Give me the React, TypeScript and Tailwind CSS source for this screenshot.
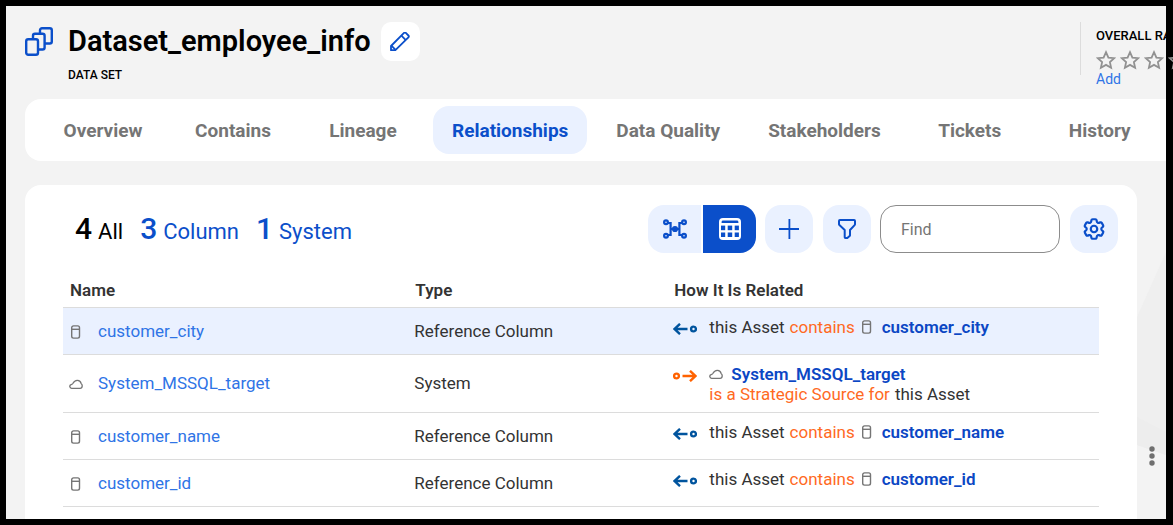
import React, { useState } from 'react';
import { HiOutlineCog6Tooth } from 'react-icons/hi2';

type AssetKind = 'column' | 'system';

interface Relationship {
  name: string;
  kind: AssetKind;
  type: string;
  relation: string;
  direction: 'in' | 'out';
}

const TABS = ['Overview', 'Contains', 'Lineage', 'Relationships', 'Data Quality', 'Stakeholders', 'Tickets', 'History'];

const COUNTS = [
  { count: 4, label: 'All' },
  { count: 3, label: 'Column' },
  { count: 1, label: 'System' },
];

const RELATIONSHIPS: Relationship[] = [
  { name: 'customer_city', kind: 'column', type: 'Reference Column', relation: 'contains', direction: 'in' },
  { name: 'System_MSSQL_target', kind: 'system', type: 'System', relation: 'is a Strategic Source for', direction: 'out' },
  { name: 'customer_name', kind: 'column', type: 'Reference Column', relation: 'contains', direction: 'in' },
  { name: 'customer_id', kind: 'column', type: 'Reference Column', relation: 'contains', direction: 'in' },
];

const DatasetIcon = () => (
  <svg width="28" height="29" viewBox="0 0 28 29" fill="none" stroke="currentColor" strokeWidth="2.4" className="shrink-0">
    <rect x="1.2" y="12.2" width="11.8" height="15.6" rx="2" />
    <path d="M8 12V8.7a2 2 0 0 1 2-2h7.6a2 2 0 0 1 2 2v11.8a2 2 0 0 1-2 2H13" />
    <path d="M15 6.5V3.2a2 2 0 0 1 2-2h7.8a2 2 0 0 1 2 2v11.3a2 2 0 0 1-2 2H20" />
  </svg>
);

const PencilIcon = () => (
  <svg width="20" height="20" viewBox="0 0 20 20" fill="none" stroke="currentColor" strokeWidth="1.8" strokeLinejoin="round">
    <path d="M1 18.2v-4.2L14 .9q.9-.9 1.8 0l2.600 2.600q.9.9 0 1.800L5.400 18.200z" />
    <path d="M11.400 3.600l4.200 4.200M1.400 13.600l4.200 4.200" />
  </svg>
);

const StarIcon = () => (
  <svg width="20" height="20" viewBox="0 0 20 20" fill="none" stroke="#919191" strokeWidth="1.8">
    <path d="M10 2.200l2.400 5.400 5.800.6-4.300 3.900 1.200 5.600L10 14.900l-5.100 2.800 1.200-5.600L1.800 8.200l5.800-.6z" />
  </svg>
);

const GraphIcon = () => (
  <svg width="24" height="20" viewBox="0 0 24 20" fill="none" stroke="currentColor" strokeWidth="2.2">
    <circle cx="3" cy="3.200" r="1.900" />
    <circle cx="21" cy="3.200" r="1.900" />
    <circle cx="3" cy="16.800" r="1.900" />
    <circle cx="21" cy="16.800" r="1.900" />
    <path d="M4.800 4H7.600v12H4.800M19.200 4h-2.800v12h2.800M7 10h10" />
    <circle cx="12" cy="10" r="2" fill="currentColor" />
  </svg>
);

const TableIcon = () => (
  <svg width="22" height="22" viewBox="0 0 22 22">
    <rect width="22" height="22" rx="4" fill="currentColor" />
    <g fill="#0b4fca">
      <path d="M4 2.600h14q1.400 0 1.400 1.400v1H2.600V4q0-1.400 1.400-1.400z" />
      <rect x="2" y="7.600" width="4.200" height="4.600" />
      <rect x="8.700" y="7.600" width="4.500" height="4.600" />
      <rect x="15.700" y="7.600" width="4.200" height="4.600" />
      <rect x="2" y="14.500" width="4.200" height="4.500" />
      <rect x="8.700" y="14.500" width="4.500" height="4.500" />
      <rect x="15.700" y="14.500" width="4.200" height="4.500" />
    </g>
  </svg>
);

const PlusIcon = () => (
  <svg width="20" height="20" viewBox="0 0 20 20" stroke="currentColor" strokeWidth="1.8">
    <path d="M10.400 0v20M0 10h20" />
  </svg>
);

const FilterIcon = () => (
  <svg width="18" height="20" viewBox="0 0 18 20" fill="none" stroke="currentColor" strokeWidth="2" strokeLinejoin="round">
    <path d="M1.900 1h14.200q.9 0 .9.900v3.300q0 .5-.4.900L12 11v5.200q0 .5-.4.800l-2 1.700q-.3.300-.7.300H7.400q-.7 0-.7-.7V11L1.400 6.100Q1 5.700 1 5.200V1.900Q1 1 1.900 1z" />
  </svg>
);

const AssetIcon: React.FC<{ kind: AssetKind }> = ({ kind }) =>
  kind === 'column' ? (
    <svg width="14" height="14" viewBox="0 0 14 14" fill="none" stroke="#757575" strokeWidth="1.400" className="shrink-0">
      <rect x="2.700" y=".9" width="7.800" height="12.200" rx="1.800" />
      <path d="M2.700 4.300h7.800" />
    </svg>
  ) : (
    <svg width="14" height="14" viewBox="0 0 14 14" fill="none" stroke="#757575" strokeWidth="1.300" className="shrink-0">
      <path d="M2.600 11.300a1.900 1.900 0 0 1-.5-3.700q1.100-.2 1.700-1.100C4.900 4.500 6.300 3.400 8.200 3.300c2.200-.1 3.500 1.200 3.900 3.100.9.700 1.200 1.600 1.100 2.700-.1 1.300-.9 2.200-2.100 2.200z" />
    </svg>
  );

const DirectionIcon: React.FC<{ direction: 'in' | 'out' }> = ({ direction }) => (
  <svg
    width="24"
    height="12"
    viewBox="0 0 24 12"
    fill="none"
    strokeWidth="2.400"
    className={`shrink-0 ${direction === 'in' ? 'stroke-[#00549e]' : 'stroke-[#ff6200]'}`}
  >
    {direction === 'in' ? (
      <>
        <path d="M14.500 6H1.600M7 .8L1.600 6 7 11.200" />
        <circle cx="20.500" cy="6" r="2.400" />
      </>
    ) : (
      <>
        <path d="M9.500 6h12.900M17 .8L22.400 6 17 11.200" />
        <circle cx="3.500" cy="6" r="2.400" />
      </>
    )}
  </svg>
);

const ToolButton: React.FC<{ label: string; children: React.ReactNode }> = ({ label, children }) => (
  <button aria-label={label} className="flex size-12 items-center justify-center rounded-2xl bg-[#eaf1ff]">
    {children}
  </button>
);

const Header = () => (
  <header className="flex h-[93px] justify-between pl-[19px] pt-4">
    <div>
      <div className="flex items-center">
        <span className="text-[#0b4fca]">
          <DatasetIcon />
        </span>
        <h1 className="ml-[15px] text-[29px] font-semibold leading-[39px] text-black">Dataset_employee_info</h1>
        <button aria-label="Edit name" className="ml-2.5 flex size-[39px] items-center justify-center rounded-[10px] bg-white text-[#0b4fca]">
          <PencilIcon />
        </button>
      </div>
      <p className="ml-[43px] mt-1 text-xs font-medium leading-5 text-black">DATA SET</p>
    </div>
    <div className="flex w-[86px] shrink-0">
      <div className="h-[53px] w-px shrink-0 bg-[#dcdcdc]" />
      <div className="ml-[15px] shrink-0 whitespace-nowrap pt-1">
        <p className="text-[13px] font-medium leading-5 text-black">OVERALL RATING</p>
        <div className="mt-1 flex gap-1">
          {[1, 2, 3, 4, 5].map((n) => (
            <StarIcon key={n} />
          ))}
        </div>
        <a href="#" className="block text-sm leading-[18px] text-[#2f74e6]">
          Add
        </a>
      </div>
    </div>
  </header>
);

const RelatedCell: React.FC<{ item: Relationship }> = ({ item }) => {
  const asset = (
    <span className="inline-flex items-center">
      <AssetIcon kind={item.kind} />
      <a href="#" className="ml-2 font-semibold text-[#0b47c4]">
        {item.name}
      </a>
    </span>
  );

  return (
    <div className="flex items-start leading-5">
      <span className="mr-3 pt-1.5">
        <DirectionIcon direction={item.direction} />
      </span>
      {item.direction === 'in' ? (
        <div className="flex items-center gap-[5px]">
          <span>this Asset</span>
          <span className="text-[#ff6a1f]">{item.relation}</span>
          {asset}
        </div>
      ) : (
        <div>
          <div className="flex">{asset}</div>
          <div className="flex gap-[5px]">
            <span className="text-[#ff6a1f]">{item.relation}</span>
            <span>this Asset</span>
          </div>
        </div>
      )}
    </div>
  );
};

const App = () => {
  const [activeTab, setActiveTab] = useState('Relationships');

  return (
    <div className="overflow-hidden">
      <div className="flex min-h-screen flex-col border-[6px] border-r-[7px] border-black bg-[#f3f3f3] font-[Roboto,sans-serif] text-[#333]">
        <Header />

        <nav className="ml-[19px] flex h-[62px] shrink-0 items-center gap-2.5 rounded-l-2xl bg-white pl-[18px]">
          {TABS.map((tab) => (
            <button
              key={tab}
              onClick={() => setActiveTab(tab)}
              className={`h-12 min-w-[120px] shrink-0 whitespace-nowrap rounded-2xl px-[19px] pt-0.5 text-[19px] font-bold ${
                tab === activeTab ? 'bg-[#eaf1ff] text-[#0b4fca]' : 'text-[#757575]'
              }`}
            >
              {tab}
            </button>
          ))}
        </nav>

        <main className="mt-6 flex flex-1 pl-[19px]">
          <section className="min-w-0 flex-1 rounded-t-2xl bg-white pt-5">
            <div className="flex items-center justify-between pl-[50px] pr-[19px]">
              <div className="flex gap-[17px]">
                {COUNTS.map(({ count, label }) => (
                  <button key={label} className={`flex items-baseline gap-1.5 ${label === 'All' ? 'text-black' : 'text-[#0b4fca]'}`}>
                    <span className="text-[30px] font-medium leading-10">{count}</span>
                    <span className="text-[22px]">{label}</span>
                  </button>
                ))}
              </div>

              <div className="flex gap-[9px]">
                <div className="flex gap-0.5">
                  <button aria-label="Graph view" className="flex h-12 w-[53px] items-center justify-center rounded-l-2xl bg-[#eaf1ff] text-[#0b4fca]">
                    <GraphIcon />
                  </button>
                  <button aria-label="Table view" className="flex h-12 w-[53px] items-center justify-center rounded-r-2xl bg-[#0b4fca] text-white">
                    <TableIcon />
                  </button>
                </div>
                <div className="flex gap-2.5 text-[#0b4fca]">
                  <ToolButton label="Add relationship">
                    <PlusIcon />
                  </ToolButton>
                  <ToolButton label="Filter">
                    <FilterIcon />
                  </ToolButton>
                </div>
                <div className="flex gap-2.5 text-[#0b4fca]">
                  <input
                    type="text"
                    aria-label="Find"
                    placeholder="Find"
                    className="h-12 w-[180px] rounded-2xl border border-[#8c8c8c] bg-white px-5 text-base text-[#333] placeholder:text-[#757575]"
                  />
                  <ToolButton label="Settings">
                    <HiOutlineCog6Tooth className="size-[26px] stroke-2" />
                  </ToolButton>
                </div>
              </div>
            </div>

            <div className="mt-5 px-[38px]">
              <table className="w-full table-fixed border-collapse text-left text-[17px]">
                <thead>
                  <tr className="h-[34px] border-b border-[#dcdcdc]">
                    <th className="w-1/3 pl-[7px] pt-0.5 font-semibold">Name</th>
                    <th className="w-1/4 pl-[7px] pt-0.5 font-semibold">Type</th>
                    <th className="pl-[7px] pt-0.5 font-semibold">How It Is Related</th>
                  </tr>
                </thead>
                <tbody>
                  {RELATIONSHIPS.map((item, index) => (
                    <tr key={item.name} className={`h-[47px] border-b border-[#dcdcdc] ${index === 0 ? 'bg-[#eaf1ff]' : ''}`}>
                      <td className="pl-1.5 pt-0.5">
                        <span className="flex items-center gap-[15px]">
                          <AssetIcon kind={item.kind} />
                          <a href="#" className="text-[#2f74e6]">
                            {item.name}
                          </a>
                        </span>
                      </td>
                      <td className="pl-1.5 pt-0.5">{item.type}</td>
                      <td className="pb-2 pl-1.5 pt-[9px] align-top">
                        <RelatedCell item={item} />
                      </td>
                    </tr>
                  ))}
                </tbody>
              </table>
            </div>
          </section>

          <div className="relative w-[29px] shrink-0">
            <svg width="29" height="270" viewBox="0 0 29 270" className="absolute left-0 top-0">
              <path d="M29 67L0 132v128l29 10z" fill="#efefef" />
              <path d="M0 232l29 15v23L0 260z" fill="#ededed" />
            </svg>
            <button aria-label="More options" className="relative mt-[261px] flex w-full justify-center">
              <svg width="6" height="20" viewBox="0 0 6 20" fill="#6f6f6f">
                <circle cx="3" cy="3" r="2.700" />
                <circle cx="3" cy="10" r="2.700" />
                <circle cx="3" cy="17" r="2.700" />
              </svg>
            </button>
          </div>
        </main>
      </div>
    </div>
  );
};

export default App;
